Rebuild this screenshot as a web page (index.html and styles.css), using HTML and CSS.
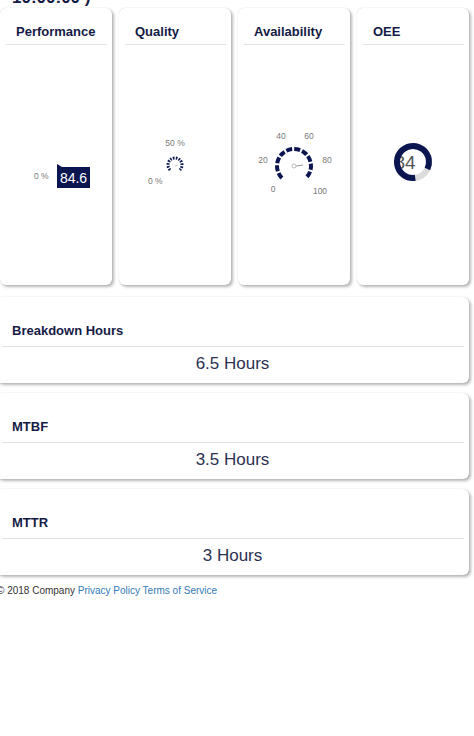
FILE: index.html
```html
<!DOCTYPE html>
<html>
<head>
<meta charset="utf-8">
<link rel="stylesheet" href="styles.css">
</head>
<body>
<div class="page">
  <h1 class="shift">10:00:00 )</h1>
  <div class="kpi-row">
    <div class="card kpi">
      <h3 class="kpi-title">Performance</h3>
      <div class="kpi-body">
        <svg class="gauge" width="112" height="100" viewBox="0 0 112 100">
          <text x="34" y="64" class="lbl">0 %</text>
          <polygon points="57,49 57,52 62,52" fill="#0b1650"/>
          <rect x="57" y="52" width="33" height="21" fill="#0b1650"/>
          <text x="73.5" y="67.5" class="val" text-anchor="middle">84.6</text>
        </svg>
      </div>
    </div>
    <div class="card kpi">
      <h3 class="kpi-title">Quality</h3>
      <div class="kpi-body">
        <svg class="gauge" width="112" height="100" viewBox="0 0 112 100">
          <text x="56" y="31" class="lbl" text-anchor="middle">50 %</text>
          <text x="29" y="69" class="lbl">0 %</text>
          <path d="M51.05 54.95 A7 7 0 1 1 60.95 54.95" fill="none" stroke="#0b1650" stroke-width="3" stroke-dasharray="1.6 1.2"/>
          <line x1="56" y1="51" x2="59" y2="50" stroke="#bbb" stroke-width="0.8"/>
        </svg>
      </div>
    </div>
    <div class="card kpi">
      <h3 class="kpi-title">Availability</h3>
      <div class="kpi-body">
        <svg class="gauge" width="112" height="100" viewBox="0 0 112 100">
          <text x="35" y="77" class="lbl" text-anchor="middle">0</text>
          <text x="25" y="48" class="lbl" text-anchor="middle">20</text>
          <text x="43" y="24" class="lbl" text-anchor="middle">40</text>
          <text x="71" y="24" class="lbl" text-anchor="middle">60</text>
          <text x="89" y="48" class="lbl" text-anchor="middle">80</text>
          <text x="82" y="79" class="lbl" text-anchor="middle">100</text>
          <path d="M43.98 63.02 A17 17 0 1 1 68.02 63.02" fill="none" stroke="#0b1650" stroke-width="4" stroke-dasharray="6 2"/>
          <line x1="58" y1="51" x2="65" y2="50" stroke="#999" stroke-width="1"/>
          <circle cx="56" cy="51" r="2" fill="#fff" stroke="#aaa" stroke-width="0.8"/>
        </svg>
      </div>
    </div>
    <div class="card kpi">
      <h3 class="kpi-title">OEE</h3>
      <div class="kpi-body">
        <svg class="gauge" width="112" height="100" viewBox="0 0 112 100">
          <text x="48" y="54" class="big" text-anchor="middle">84</text>
          <circle cx="56" cy="47" r="16" fill="none" stroke="#dcdcdc" stroke-width="6"/>
          <circle cx="56" cy="47" r="16" fill="none" stroke="#0b1650" stroke-width="6"
            stroke-dasharray="84.4 100.53" transform="rotate(82 56 47)"/>
        </svg>
      </div>
    </div>
  </div>

  <div class="card stat">
    <h3 class="stat-title">Breakdown Hours</h3>
    <div class="stat-value">6.5 Hours</div>
  </div>
  <div class="card stat">
    <h3 class="stat-title">MTBF</h3>
    <div class="stat-value">3.5 Hours</div>
  </div>
  <div class="card stat">
    <h3 class="stat-title">MTTR</h3>
    <div class="stat-value">3 Hours</div>
  </div>

  <footer class="footer">© 2018 Company <a href="#">Privacy Policy</a> <a href="#">Terms of Service</a></footer>
</div>
</body>
</html>
```

FILE: styles.css
```css
html, body {
  margin: 0;
  padding: 0;
  background: #fff;
  font-family: "Liberation Sans", Arial, sans-serif;
  overflow: hidden;
}

.page {
  margin: 0 5px 0 -4px;
}

.shift {
  margin: -13px 0 -1px 0;
  padding-left: 16px;
  font-size: 17px;
  line-height: 22px;
  font-weight: bold;
  color: #141a46;
}

.kpi-row {
  display: grid;
  grid-template-columns: repeat(4, 112px);
  gap: 7px;
  padding-left: 4px;
}

.card {
  background: #fff;
  border-radius: 6px;
  box-shadow: 0 0 1px rgba(0, 0, 0, 0.25), 2px 2px 3px rgba(0, 0, 0, 0.28);
}

.kpi {
  height: 277px;
  display: flex;
  flex-direction: column;
}

.kpi-title {
  margin: 0 5px 0 6px;
  padding: 16px 10px 5px;
  font-size: 13px;
  line-height: 15px;
  font-weight: bold;
  color: #141a46;
  border-bottom: 1px solid #e2e2e2;
}

.kpi-body {
  flex: 1;
  display: flex;
  align-items: center;
  justify-content: center;
}

.gauge {
  display: block;
}

.gauge .lbl {
  font-family: "Liberation Sans", Arial, sans-serif;
  font-size: 8.5px;
  fill: #7a7a7a;
}

.gauge .val {
  font-family: "Liberation Sans", Arial, sans-serif;
  font-size: 14px;
  fill: #fff;
}

.gauge .big {
  font-family: "Liberation Sans", Arial, sans-serif;
  font-size: 19px;
  fill: #555;
}

.stat {
  margin-top: 12px;
  height: 86px;
  display: flex;
  flex-direction: column;
}

.stat + .stat {
  margin-top: 10px;
}

.stat-title {
  margin: 0 5px 0 6px;
  padding: 26px 10px 8px;
  font-size: 13px;
  line-height: 15px;
  font-weight: bold;
  color: #141a46;
  border-bottom: 1px solid #e2e2e2;
}

.stat-value {
  padding-top: 7px;
  text-align: center;
  font-size: 17px;
  line-height: 20px;
  color: #2c3152;
}

.footer {
  margin-top: 8px;
  padding-left: 1px;
  font-size: 10px;
  line-height: 15px;
  color: #333;
}

.footer a {
  color: #337ab7;
  text-decoration: none;
}
```
